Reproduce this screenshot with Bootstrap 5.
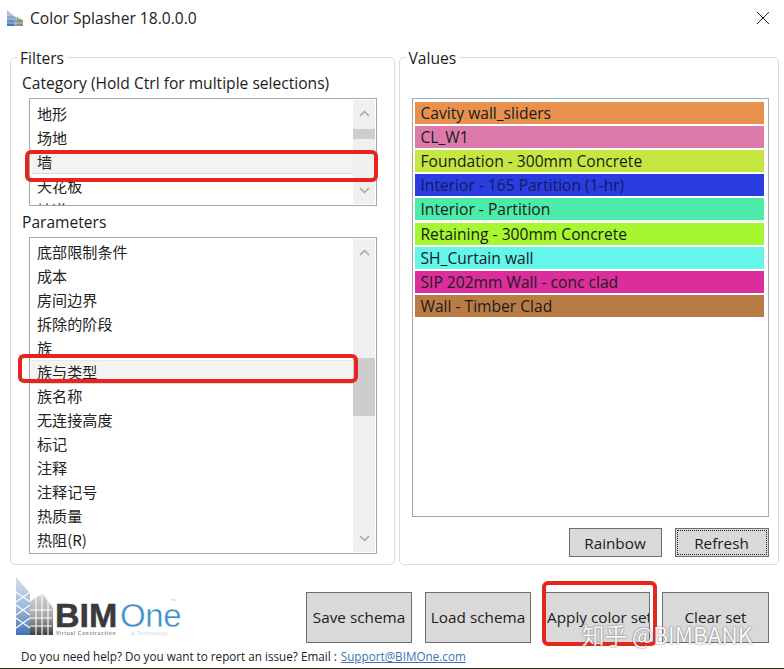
<!DOCTYPE html>
<html lang="zh">
<head>
<meta charset="utf-8">
<title>Color Splasher</title>
<link href="https://cdn.jsdelivr.net/npm/bootstrap@5.3.0/dist/css/bootstrap.min.css" rel="stylesheet">
<style>
html,body{margin:0;background:#fff}
body{font-family:"Open Sans","Noto Sans","Noto Sans CJK SC",sans-serif;font-size:15.6px;color:#1c1c1c;line-height:24px}
.win{width:784px;height:669px;position:relative;overflow:hidden;border-bottom:1px solid #2b2b1f}
.tbar{height:36px;padding:0 14px 0 6px}
.tbar-text{font-size:15.6px;margin-left:6px;color:#222}
.panes{height:520px;padding:0 5px 0 10px;gap:4px;margin-top:10px}
.grp{border:1px solid #dcdcdc;border-radius:5px;margin:0;min-width:0;height:519px;padding:0;width:385px}
.grp-v{width:381px;padding:0}
.grp legend{float:none;width:auto;font-size:15.6px;line-height:22px;margin:0 0 0 6px;padding:1px 3px 0;}
.flabel{padding-left:11px;height:24px;margin-top:2px;line-height:24px}
.flabel2{margin-top:4px;margin-bottom:3px}
.lbox{border:1px solid #a6a6a6;margin-left:18px;width:348px;background:#fff;overflow:hidden;margin-top:3px}
.lbox-cat{height:108px}
.lbox-par{height:317px}
.rows{padding:3px 0 0 1px;font-family:"Noto Sans CJK SC","Noto Sans",sans-serif;font-size:15.1px;color:#222}
.rows-par{padding-top:2px}
.lrow{height:24px;line-height:23px;padding-left:6px;white-space:nowrap}
.lrow-sel{background:#f3f3f3;border-bottom:1px solid #dadada;border-top:1px solid #e8e8e8;line-height:21px}
.sbar{width:22px;background:#f0f0f0;margin:1px 1px 0 0;height:calc(100% - 2px);position:relative}
.sbar svg{display:block;margin:10px auto 0}
.sbar svg.dn{position:absolute;bottom:10px;left:6px}
.th{background:#cdcdcd;position:absolute;left:0;right:0}
.th-cat{top:29px;height:10px}
.th-par{top:119px;height:58px}
.vbox{border:1px solid #a4a4a4;margin:29px 0 0 12px;width:357px;height:419px;padding:3px 4px 0 2px;gap:2px;border-top-color:#9db1c7;border-right-color:#9db1c7}
.vrow{height:22px;line-height:22px;padding-left:6px;font-size:15.6px;color:#1b1b1b}
.vrow-dk{color:#141a5c}
.vrow-gap{margin-top:1px}
.wbtn{background:#d9d9d9;border:1px solid #6e6e6e;border-radius:0;color:#1c1c1c;font-size:15.3px;padding:0;line-height:22px}
.wbtn:hover{background:#d9d9d9;color:#1c1c1c;border-color:#6e6e6e}
.acts{margin:11px 0 0 169px;gap:13px}
.act-s{width:93px;height:29px}
.dot{outline:1px dotted #222;outline-offset:-3px;width:94px}
.foot{height:70px;padding-left:14px}
.logo{width:172px;height:66px;display:block;margin-top:6px}
.fbtns{margin:26px 0 0 120px}
.fb{width:106px;height:51px;white-space:nowrap;overflow:hidden;margin-right:13px;padding-bottom:2px}
.fb-ap{width:105px;text-align:left;padding-left:1px;margin-left:1px;margin-right:12px}
.fb-cl{width:107px;margin-right:0}
.help{font-size:11.7px;line-height:14px;padding-left:21px;margin-top:13px;color:#222;font-family:"Open Sans",sans-serif;white-space:nowrap}
.help a{color:#3d72b5;margin-left:1px;font-size:11.7px}
.ring{position:absolute;border:4px solid #e8241f;border-radius:6px;pointer-events:none}
.r1{left:25px;top:150px;width:353px;height:32px}
.r2{left:18px;top:354px;width:340px;height:29px}
.r3{left:542px;top:581px;width:115px;height:65px}
.wm{position:absolute;left:582px;top:619px;font-size:22.5px;line-height:30px;color:#fff;font-family:"Noto Sans CJK SC","Noto Sans",sans-serif;opacity:.86;white-space:nowrap;text-shadow:0 0 1px #777,0 0 2px #666}
</style>
</head>
<body>
<div class="win">
  <div class="tbar d-flex align-items-center">
    <svg width="18" height="18" viewBox="0 0 18 18"><defs><linearGradient id="tg" x1="0" y1="0" x2="0" y2="1"><stop offset="0" stop-color="#c3d0e6"/><stop offset="1" stop-color="#3f6fb0"/></linearGradient></defs><path d="M1 1l7 6v10H1z" fill="url(#tg)"/><path d="M8 7l3 2v8H8z" fill="#8b9fbc"/><path d="M11 8l6 3v6h-6z" fill="#8f8f80"/><path d="M1 6h16M1 10h16M1 14h16" stroke="#fff" stroke-width=".7" opacity=".7"/></svg>
    <span class="tbar-text">Color Splasher 18.0.0.0</span>
    <svg class="ms-auto" width="14" height="14" viewBox="0 0 14 14"><path d="M1 1l12 12M13 1L1 13" stroke="#222" stroke-width="1" fill="none"/></svg>
  </div>
  <div class="panes d-flex">
    <fieldset class="grp">
      <legend>Filters</legend>
      <div class="flabel">Category (Hold Ctrl for multiple selections)</div>
      <div class="lbox lbox-cat d-flex">
        <div class="rows flex-grow-1">
          <div class="lrow">地形</div>
          <div class="lrow">场地</div>
          <div class="lrow lrow-sel">墙</div>
          <div class="lrow">天花板</div>
          <div class="lrow">坡道</div>
        </div>
        <div class="sbar flex-shrink-0">
          <svg width="11" height="7" viewBox="0 0 11 7"><path d="M1 6l4.500-4.500L10 6" stroke="#a6a6a6" stroke-width="1.500" fill="none"/></svg>
          <div class="th th-cat"></div>
          <svg class="dn" width="11" height="7" viewBox="0 0 11 7"><path d="M1 1l4.500 4.500L10 1" stroke="#a6a6a6" stroke-width="1.500" fill="none"/></svg>
        </div>
      </div>
      <div class="flabel flabel2">Parameters</div>
      <div class="lbox lbox-par d-flex mt-0">
        <div class="rows rows-par flex-grow-1">
          <div class="lrow">底部限制条件</div>
          <div class="lrow">成本</div>
          <div class="lrow">房间边界</div>
          <div class="lrow">拆除的阶段</div>
          <div class="lrow">族</div>
          <div class="lrow lrow-sel">族与类型</div>
          <div class="lrow">族名称</div>
          <div class="lrow">无连接高度</div>
          <div class="lrow">标记</div>
          <div class="lrow">注释</div>
          <div class="lrow">注释记号</div>
          <div class="lrow">热质量</div>
          <div class="lrow">热阻(R)</div>
        </div>
        <div class="sbar flex-shrink-0">
          <svg width="11" height="7" viewBox="0 0 11 7"><path d="M1 6l4.500-4.500L10 6" stroke="#a6a6a6" stroke-width="1.500" fill="none"/></svg>
          <div class="th th-par"></div>
          <svg class="dn" width="11" height="7" viewBox="0 0 11 7"><path d="M1 1l4.500 4.500L10 1" stroke="#a6a6a6" stroke-width="1.500" fill="none"/></svg>
        </div>
      </div>
    </fieldset>
    <fieldset class="grp grp-v">
      <legend>Values</legend>
      <div class="vbox d-flex flex-column">
        <div class="vrow flex-shrink-0" style="background:#e8914e">Cavity wall_sliders</div>
        <div class="vrow flex-shrink-0" style="background:#dc7baa">CL_W1</div>
        <div class="vrow flex-shrink-0" style="background:#c6e642">Foundation - 300mm Concrete</div>
        <div class="vrow vrow-dk flex-shrink-0" style="background:#2a3de0">Interior - 165 Partition (1-hr)</div>
        <div class="vrow flex-shrink-0" style="background:#4debaa">Interior - Partition</div>
        <div class="vrow vrow-gap flex-shrink-0" style="background:#a6f72f">Retaining - 300mm Concrete</div>
        <div class="vrow flex-shrink-0" style="background:#64f6ea">SH_Curtain wall</div>
        <div class="vrow flex-shrink-0" style="background:#db2e9c">SIP 202mm Wall - conc clad</div>
        <div class="vrow flex-shrink-0" style="background:#ba7c45">Wall - Timber Clad</div>
      </div>
      <div class="acts d-flex">
        <button class="btn wbtn act-s" type="button">Rainbow</button>
        <button class="btn wbtn act-s dot" type="button">Refresh</button>
      </div>
    </fieldset>
  </div>
  <div class="foot d-flex">
    <svg class="logo flex-shrink-0" viewBox="0 0 172 66">
      <defs>
        <linearGradient id="bt" x1="0" y1="0" x2="0" y2="1"><stop offset="0" stop-color="#d3deee"/><stop offset=".55" stop-color="#9db7da"/><stop offset="1" stop-color="#3f72b5"/></linearGradient>
        <linearGradient id="gt" x1="0" y1="0" x2="0" y2="1"><stop offset="0" stop-color="#d6d6d6"/><stop offset=".55" stop-color="#a5a5a5"/><stop offset="1" stop-color="#3d3d3d"/></linearGradient>
      </defs>
      <path d="M2 5l14 16v42H2z" fill="url(#bt)"/>
      <path d="M16 30l6-5 7-3 10 14v27H16z" fill="url(#gt)"/>
      <path d="M2 20l14 10M16 20L2 30M2 33l14 10M16 33L2 43M2 46l14 10M16 46L2 56M16 38h22M16 46h22M16 54h22M22 25v38M28 23v40M34 29v34" stroke="#fff" stroke-width="1.100" fill="none"/>
      <text x="41" y="55" font-family="Liberation Sans,sans-serif" font-weight="700" font-size="34" fill="#3a3a3c" stroke="#3a3a3c" stroke-width=".5">BIM</text>
      <text x="106" y="55" font-family="Liberation Sans,sans-serif" font-size="33" letter-spacing="-.4" fill="#3d8fcb" stroke="#fff" stroke-width=".4">One</text>
      <text x="157" y="29" font-family="Liberation Sans,sans-serif" font-size="4" fill="#bbb">Inc</text>
      <text x="42" y="63" font-family="Liberation Sans,sans-serif" font-size="4.800" font-weight="700" letter-spacing=".7" fill="#8a8a8a">Virtual Construction</text>
      <text x="117" y="63" font-family="Liberation Sans,sans-serif" font-size="4.800" letter-spacing=".7" fill="#cfcfcf">&amp; Technology</text>
    </svg>
    <div class="fbtns d-flex align-items-start">
      <button class="btn wbtn fb" type="button">Save schema</button>
      <button class="btn wbtn fb" type="button">Load schema</button>
      <button class="btn wbtn fb fb-ap" type="button">Apply color set</button>
      <button class="btn wbtn fb fb-cl" type="button">Clear set</button>
    </div>
  </div>
  <div class="help">Do you need help? Do you want to report an issue? Email : <a href="#">Support@BIMOne.com</a></div>
  <div class="ring r1"></div>
  <div class="ring r2"></div>
  <div class="ring r3"></div>
  <div class="wm">知乎 @BIMBANK</div>
</div>
<script src="https://cdn.jsdelivr.net/npm/bootstrap@5.3.0/dist/js/bootstrap.bundle.min.js"></script>
</body>
</html>
